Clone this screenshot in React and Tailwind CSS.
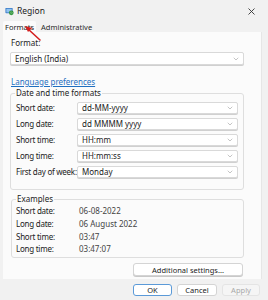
import { ChevronDown } from 'lucide-react'

const font = { fontFamily: '"Noto Sans", "Open Sans", sans-serif' }

function Select({ value, className = '' }) {
  return (
    <div
      className={`flex items-center justify-between rounded-[2px] border border-[#d9d9d9] bg-white pl-[4px] pr-[3px] shadow-[0_1px_0_#d0d0d0] ${className}`}
    >
      <span className="whitespace-nowrap text-[8px] leading-[10px] text-[#222]">{value}</span>
      <ChevronDown size={8} strokeWidth={1.5} className="text-[#8a8a8a]" />
    </div>
  )
}

function GroupBox({ title, className = '', children }) {
  return (
    <div className={`relative rounded-[3px] border border-[#dedede] ${className}`}>
      <span className="absolute left-[4px] top-[-6px] whitespace-nowrap bg-[#fbfbfb] px-[1px] text-[8px] leading-[10px] text-[#222]">
        {title}
      </span>
      {children}
    </div>
  )
}

const formats = [
  ['Short date:', 'dd-MM-yyyy'],
  ['Long date:', 'dd MMMM yyyy'],
  ['Short time:', 'HH:mm'],
  ['Long time:', 'HH:mm:ss'],
  ['First day of week:', 'Monday'],
]

const examples = [
  ['Short date:', '06-08-2022'],
  ['Long date:', '06 August 2022'],
  ['Short time:', '03:47'],
  ['Long time:', '03:47:07'],
]

export default function App() {
  return (
    <div className="relative h-[300px] w-[268px] overflow-hidden bg-[#f1f1f1] text-[#222]" style={font}>
      {/* title bar */}
      <div className="flex h-[22px] items-center pl-[5px] pr-[13px]">
        <svg width="9" height="9" viewBox="0 0 10 10">
          <rect x="0.5" y="1" width="8" height="6" rx="0.8" fill="#3a7bc8" />
          <rect x="1.5" y="2" width="6" height="4" fill="#8fc3ef" />
          <circle cx="7" cy="6.5" r="2.6" fill="#2f8f3a" />
          <path d="M5.5 6 Q7 5 8.6 6.2 M6 7.8 Q7 7 8.4 7.8" stroke="#9fe0a0" strokeWidth="0.6" fill="none" />
        </svg>
        <span className="ml-[3px] text-[8.5px] leading-[10px]">Region</span>
        <svg className="ml-auto" width="7" height="7" viewBox="0 0 7 7">
          <path d="M0.5 0.5 L6.5 6.5 M6.5 0.5 L0.5 6.5" stroke="#333" strokeWidth="0.9" />
        </svg>
      </div>

      {/* tabs */}
      <div className="flex h-[10px] items-end pl-[3px]">
        <div className="flex h-[11px] items-center rounded-t-[2px] bg-[#fbfbfb] px-[2px] text-[7.5px] leading-[10px]">
          Formats
        </div>
        <div className="ml-[5px] flex h-[10px] items-center text-[7.5px] leading-[10px] text-[#2b2b2b]">
          Administrative
        </div>
      </div>

      {/* panel */}
      <div className="ml-[3px] flex h-[247px] w-[259px] flex-col border-r border-[#e6e6e6] bg-[#fbfbfb] pl-[7px]">
        <div className="mt-[6px] pl-[1px] text-[8px] leading-[10px]">Format:</div>
        <Select value="English (India)" className="mt-[4px] h-[13px] w-[234px]" />
        <div className="mt-[12px] pl-[1px] text-[8px] leading-[10px] text-[#1f6fc0] underline underline-offset-[1px]">
          Language preferences
        </div>

        <GroupBox title="Date and time formats" className="mt-[6px] h-[97px] w-[234px]">
          <div className="flex flex-col gap-[4px] pt-[8px]">
            {formats.map(([label, value]) => (
              <div key={label} className="flex h-[12px] items-center">
                <span className="w-[66px] shrink-0 whitespace-nowrap pl-[5px] text-[8px] leading-[12px] tracking-[-0.25px]">
                  {label}
                </span>
                <Select value={value} className="h-[12px] w-[161px]" />
              </div>
            ))}
          </div>
        </GroupBox>

        <GroupBox title="Examples" className="ml-[1px] mt-[9px] h-[59px] w-[233px]">
          <div className="flex flex-col pt-[5px]">
            {examples.map(([label, value]) => (
              <div key={label} className="flex h-[12.7px] items-center text-[8px] leading-[12px]">
                <span className="w-[67px] whitespace-nowrap pl-[4px] tracking-[-0.25px]">{label}</span>
                <span className="text-[#444]">{value}</span>
              </div>
            ))}
          </div>
        </GroupBox>

        <div className="ml-[123px] mt-[5px] flex h-[13px] w-[110px] items-center justify-center rounded-[3px] border border-[#d4d4d4] bg-white text-[7.5px] leading-[10px] shadow-[0_1px_0_#c8c8c8]">
          Additional settings...
        </div>
      </div>

      {/* buttons */}
      <div className="mt-[5px] flex gap-[5px] pl-[133px]">
        <div className="flex h-[12px] w-[39px] items-center justify-center rounded-[3px] border border-[#5b9ad8] bg-white text-[7.5px] leading-[10px]">
          OK
        </div>
        <div className="flex h-[12px] w-[40px] items-center justify-center rounded-[3px] border border-[#d4d4d4] bg-white text-[7.5px] leading-[10px]">
          Cancel
        </div>
        <div className="flex h-[12px] w-[38px] items-center justify-center rounded-[3px] border border-[#e4e4e4] bg-[#f5f5f5] text-[7.5px] leading-[10px] text-[#a8a8a8]">
          Apply
        </div>
      </div>

      {/* annotation arrow */}
      <svg className="absolute left-[22px] top-[23px]" width="22" height="20" viewBox="0 0 22 20">
        <path d="M18 17 L6 6" stroke="#d41f1f" strokeWidth="1.6" strokeLinecap="round" />
        <path d="M3 3 L10 5 L6 9 Z" fill="#d41f1f" />
      </svg>
    </div>
  )
}
